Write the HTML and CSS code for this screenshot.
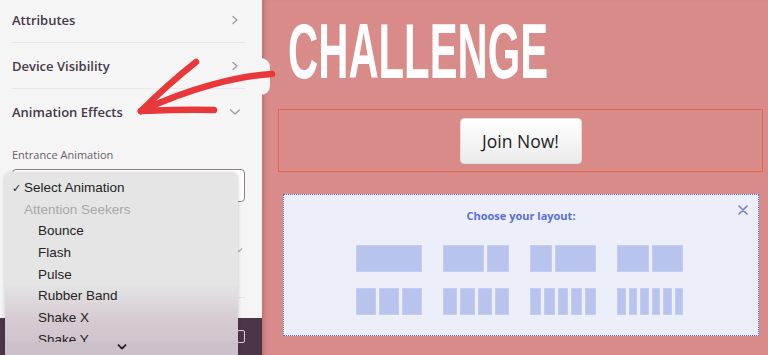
FILE: index.html
```html
<!DOCTYPE html>
<html>
<head>
<meta charset="utf-8">
<link rel="stylesheet" href="styles.css">
</head>
<body>
<div class="app">
  <aside class="panel">
    <div class="acc">
      <div class="acc-row first">
        <span>Attributes</span>
        <svg class="chev" width="8" height="10" viewBox="0 0 8 10"><path d="M2 1.5 L6 5 L2 8.5" fill="none" stroke="#a39ba2" stroke-width="1.4" stroke-linecap="round" stroke-linejoin="round"/></svg>
      </div>
      <div class="acc-row">
        <span>Device Visibility</span>
        <svg class="chev" width="8" height="10" viewBox="0 0 8 10"><path d="M2 1.5 L6 5 L2 8.5" fill="none" stroke="#a39ba2" stroke-width="1.4" stroke-linecap="round" stroke-linejoin="round"/></svg>
      </div>
      <div class="acc-row open">
        <span>Animation Effects</span>
        <svg class="chev down" width="12" height="8" viewBox="0 0 12 8"><path d="M1.5 2 L6 6 L10.5 2" fill="none" stroke="#a39ba2" stroke-width="1.4" stroke-linecap="round" stroke-linejoin="round"/></svg>
      </div>
      <div class="acc-body">
        <div class="field-label">Entrance Animation</div>
        <div class="select-box"></div>
        <div class="field2">
          <svg class="chev2" width="8" height="6" viewBox="0 0 8 6"><path d="M1 1.5 L4 4.5 L7 1.5" fill="none" stroke="#b5aeb4" stroke-width="1.2"/></svg>
        </div>
      </div>
    </div>
    <div class="panel-foot">
      <span class="device-icon"></span>
    </div>
  </aside>

  <main class="canvas">
    <h1 class="title"><span>CHALLENGE</span></h1>
    <div class="btn-row">
      <button class="join">Join Now!</button>
    </div>
    <div class="layout-box">
      <div class="layout-title">Choose your layout:</div>
      <svg class="close" width="10" height="10" viewBox="0 0 10 10"><path d="M1 1 L9 9 M9 1 L1 9" stroke="#6a7bd8" stroke-width="1.5" stroke-linecap="round"/></svg>
      <div class="layout-grid">
        <div class="lg"><i class="c1"></i></div>
        <div class="lg"><i class="c2"></i><i class="c1"></i></div>
        <div class="lg"><i class="c1"></i><i class="c2"></i></div>
        <div class="lg"><i class="c1"></i><i class="c1"></i></div>
        <div class="lg"><i class="c1"></i><i class="c1"></i><i class="c1"></i></div>
        <div class="lg"><i class="c1"></i><i class="c1"></i><i class="c1"></i><i class="c1"></i></div>
        <div class="lg"><i class="c1"></i><i class="c1"></i><i class="c1"></i><i class="c1"></i><i class="c1"></i></div>
        <div class="lg"><i class="c1"></i><i class="c1"></i><i class="c1"></i><i class="c1"></i><i class="c1"></i><i class="c1"></i></div>
      </div>
    </div>
  </main>
</div>

<div class="tab"></div>

<div class="dropdown">
  <div class="opt checked"><span class="check">✓</span>Select Animation</div>
  <div class="opt group">Attention Seekers</div>
  <div class="opt item">Bounce</div>
  <div class="opt item">Flash</div>
  <div class="opt item">Pulse</div>
  <div class="opt item">Rubber Band</div>
  <div class="opt item">Shake X</div>
  <div class="opt item">Shake Y</div>
  <div class="scroll-more">
    <svg width="10" height="6" viewBox="0 0 10 6"><path d="M1.5 1.2 L5 4.6 L8.5 1.2" fill="none" stroke="#1e1e1e" stroke-width="1.8" stroke-linecap="round" stroke-linejoin="round"/></svg>
  </div>
</div>

<svg class="arrow" width="768" height="355" viewBox="0 0 768 355">
  <g fill="none" stroke="#e8383a" stroke-width="6.5" stroke-linecap="round" stroke-linejoin="round">
    <path d="M272 74 C 238 76 190 88 141 111"/>
    <path d="M196 62 C 177 77 158 94 141 111"/>
    <path d="M141 111 C 165 110 190 109 214 110"/>
  </g>
</svg>
</body>
</html>
```

FILE: styles.css
```css
* { box-sizing: border-box; }
html, body {
  margin: 0;
  padding: 0;
  width: 768px;
  height: 355px;
  overflow: hidden;
}
body {
  position: relative;
  font-family: "Open Sans", "Noto Sans", sans-serif;
  background: #d98b8a;
}
.app {
  display: flex;
  width: 768px;
  height: 355px;
}

/* ---------- left panel ---------- */
.panel {
  width: 262px;
  flex: 0 0 262px;
  height: 355px;
  background: #f5f5f5;
  display: flex;
  flex-direction: column;
}
.acc { flex: 1; overflow: hidden; }
.acc-row {
  height: 46px;
  margin: 0 17px 0 12px;
  padding-right: 6px;
  display: flex;
  align-items: center;
  justify-content: space-between;
  border-bottom: 1px solid #e7e5e7;
  font-size: 13px;
  font-weight: 600;
  color: #47384a;
}
.acc-row.first { margin-top: -3px; }
.acc-row.open { border-bottom: none; height: 46px; }
.chev.down { margin-right: -2px; }
.acc-body { padding: 0 17px 0 12px; }
.field-label {
  font-size: 11px;
  line-height: 15px;
  color: #6c5c69;
  margin-top: 12px;
}
.select-box {
  margin-top: 7px;
  height: 33px;
  border: 1px solid #8f808d;
  border-radius: 4px;
  background: #fff;
}
.field2 {
  height: 96px;
  border-bottom: 1px solid #e7e5e7;
  display: flex;
  align-items: center;
  justify-content: flex-end;
  padding-right: 2px;
}
.panel-foot {
  height: 37px;
  background: #4b3649;
  display: flex;
  align-items: center;
  justify-content: flex-end;
  padding-right: 17px;
}
.device-icon {
  width: 8px;
  height: 13px;
  border: 1.5px solid #d9cfd7;
  border-radius: 2px;
}

/* ---------- canvas ---------- */
.canvas {
  flex: 1;
  background: #d98b8a;
  box-shadow: inset 5px 0 4px -3px rgba(90, 30, 30, 0.25);
  display: flex;
  flex-direction: column;
}
.title {
  margin: 13px 0 0 26px;
  height: 77px;
  font-family: "Liberation Sans", Arial, sans-serif;
  font-weight: 700;
  font-size: 77px;
  line-height: 77px;
  color: #fff;
  white-space: nowrap;
}
.title span {
  display: inline-block;
  transform: scaleX(0.543);
  transform-origin: 0 0;
}
.btn-row {
  margin: 19px 5px 0 16px;
  height: 63px;
  border: 1px solid #e2674f;
  display: flex;
  align-items: center;
  justify-content: center;
}
.join {
  width: 122px;
  height: 46px;
  border: 1px solid #e1dede;
  border-radius: 4px;
  background: linear-gradient(#ffffff, #ebebeb);
  font-family: "Open Sans", sans-serif;
  font-size: 17.5px;
  color: #1f1f1f;
  padding: 0;
}
.layout-box {
  position: relative;
  margin: 22px 9px 0 21px;
  height: 142px;
  background: #eceefa;
  border: 1px dotted #5565d6;
  padding-top: 14px;
}
.layout-title {
  text-align: center;
  font-size: 11px;
  line-height: 14px;
  font-weight: 700;
  color: #5b6ed6;
}
.close {
  position: absolute;
  top: 10px;
  right: 10px;
}
.layout-grid {
  margin: 22px auto 0;
  width: 330px;
  display: grid;
  grid-template-columns: repeat(4, 66px);
  column-gap: 21px;
  row-gap: 16px;
}
.lg {
  height: 27px;
  display: flex;
  gap: 3px;
}
.lg i {
  display: block;
  background: #b8c4ee;
  border: 1px solid #c3cdf1;
}
.lg i.c1 { flex: 1; }
.lg i.c2 { flex: 2; }

/* ---------- overlays ---------- */
.tab {
  position: absolute;
  left: 252px;
  top: 58px;
  width: 18px;
  height: 37px;
  border-radius: 9px;
  background: #f5f5f5;
}
.dropdown {
  position: absolute;
  left: 5px;
  top: 172px;
  width: 233px;
  height: 183px;
  overflow: hidden;
  border-radius: 5px 5px 0 0;
  background: linear-gradient(#e4e5e4 0px, #e4e5e4 112px, #d7ccd4 146px, #cbbfca 183px);
  box-shadow: 0 1px 4px rgba(0, 0, 0, 0.18);
  padding-top: 5px;
  font-family: "Liberation Sans", Arial, sans-serif;
  font-size: 13.5px;
  color: #242424;
}
.opt {
  height: 21.7px;
  line-height: 21.7px;
  white-space: nowrap;
}
.opt.checked { padding-left: 7px; }
.check {
  display: inline-block;
  width: 12px;
  font-size: 11px;
}
.opt.group { padding-left: 19px; color: #a9a9a9; }
.opt.item { padding-left: 33px; }
.scroll-more {
  position: absolute;
  left: 0;
  right: 0;
  bottom: 0;
  height: 13px;
  background: #ccc0cb;
  display: flex;
  justify-content: center;
  padding-top: 2px;
}
.arrow {
  position: absolute;
  left: 0;
  top: 0;
  pointer-events: none;
}
```
